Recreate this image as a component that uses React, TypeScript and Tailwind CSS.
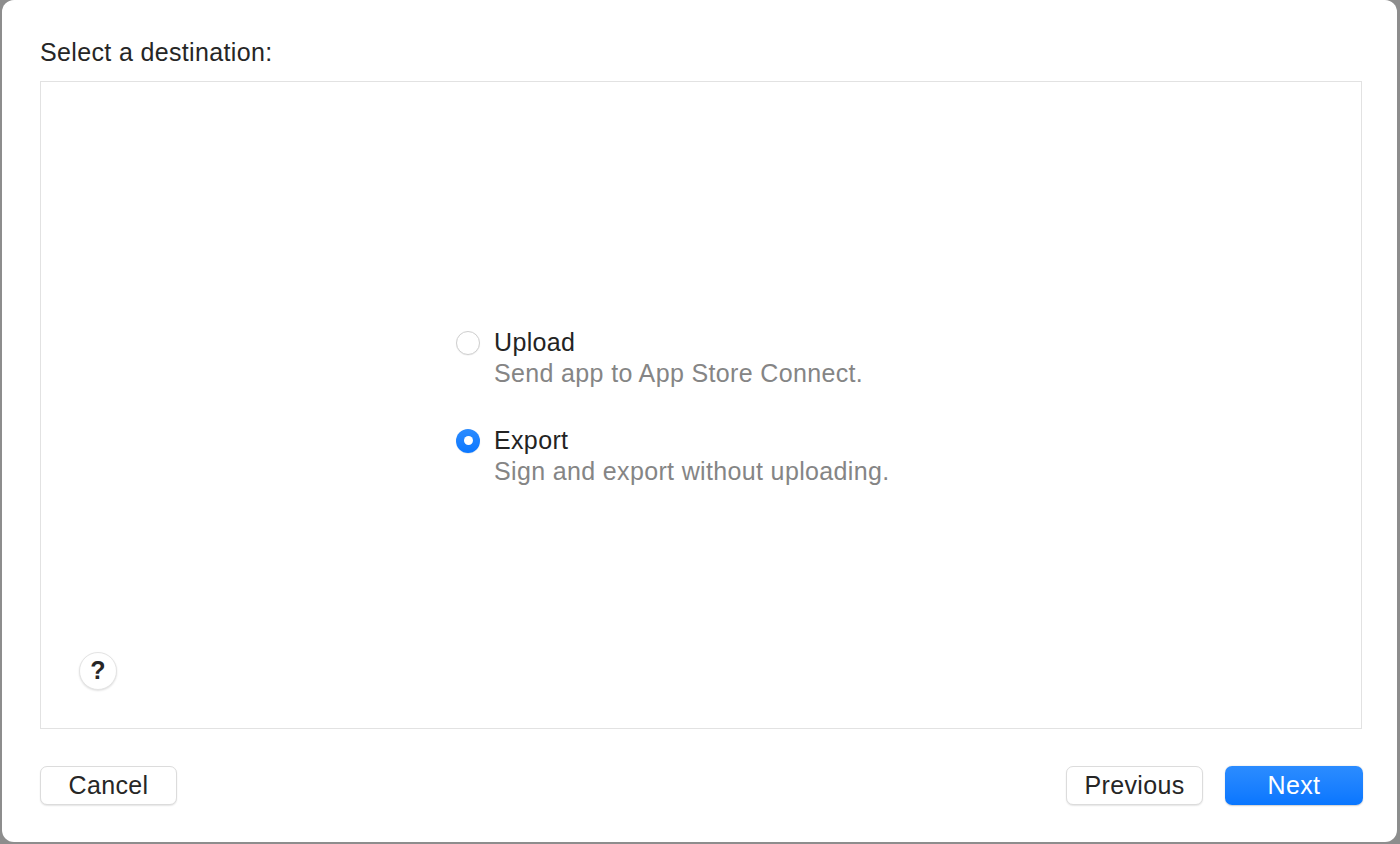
import React from "react";

function Radio({ checked }: { checked: boolean }) {
  if (checked) {
    return (
      <div className="w-[24px] h-[24px] rounded-full bg-gradient-to-b from-[#2a8bff] to-[#0a77ff] flex items-center justify-center shadow-[0_0.5px_1px_rgba(0,0,0,0.15)] shrink-0">
        <div className="w-[9px] h-[9px] rounded-full bg-white" />
      </div>
    );
  }
  return (
    <div className="w-[24px] h-[24px] rounded-full bg-white border border-[#cfcfcf] shadow-[0_0.5px_1px_rgba(0,0,0,0.08)] shrink-0" />
  );
}

function Option({ title, desc, checked }: { title: string; desc: string; checked: boolean }) {
  return (
    <div className="flex items-start gap-[14px]">
      <div className="h-[31px] flex items-center">
        <Radio checked={checked} />
      </div>
      <div className="flex flex-col">
        <div className="text-[25px] leading-[31px] tracking-[0.35px] text-[#232323]">{title}</div>
        <div className="text-[25px] leading-[31px] tracking-[0.35px] text-[#858585]">{desc}</div>
      </div>
    </div>
  );
}

function Button({ children, primary }: { children: React.ReactNode; primary?: boolean }) {
  if (primary) {
    return (
      <div className="w-[138px] h-[39px] rounded-[7px] bg-gradient-to-b from-[#2b8cff] to-[#0876ff] flex items-center justify-center text-white text-[25px] tracking-[0.35px] shadow-[0_0.5px_1.5px_rgba(0,0,0,0.2)]">
        {children}
      </div>
    );
  }
  return (
    <div className="w-[137px] h-[39px] rounded-[7px] bg-white border border-[#dcdcdc] flex items-center justify-center text-[#262626] text-[25px] tracking-[0.35px] shadow-[0_1px_1.5px_rgba(0,0,0,0.1)]">
      {children}
    </div>
  );
}

export default function App() {
  return (
    <div
      className="w-[1400px] h-[844px] bg-[#8d8d8d] overflow-hidden"
      style={{ fontFamily: '"Liberation Sans", Arial, sans-serif' }}
    >
      <div className="ml-[2px] w-[1395px] h-[842px] bg-white rounded-[12px] pl-[38px] pr-[34px] flex flex-col">
        <div className="pt-[37px] h-[81px] text-[25px] leading-[30px] tracking-[0.35px] text-[#262626]">Select a destination:</div>
        <div className="w-[1322px] h-[648px] border border-[#e2e2e2] grid">
          <div className="col-start-1 row-start-1 self-center mt-[4px] pl-[415px] flex flex-col gap-[36px]">
            <Option title="Upload" desc="Send app to App Store Connect." checked={false} />
            <Option title="Export" desc="Sign and export without uploading." checked={true} />
          </div>
          <div className="col-start-1 row-start-1 self-end justify-self-start ml-[38px] mb-[38px]">
            <div className="w-[38px] h-[38px] rounded-full bg-white border border-[#e4e4e4] shadow-[0_1px_2px_rgba(0,0,0,0.12)] flex items-center justify-center text-[25px] font-bold text-[#262626]">
              ?
            </div>
          </div>
        </div>
        <div className="mt-[37px] flex items-center">
          <Button>Cancel</Button>
          <div className="flex-1" />
          <div className="flex gap-[22px]">
            <Button>Previous</Button>
            <Button primary>Next</Button>
          </div>
        </div>
      </div>
    </div>
  );
}
